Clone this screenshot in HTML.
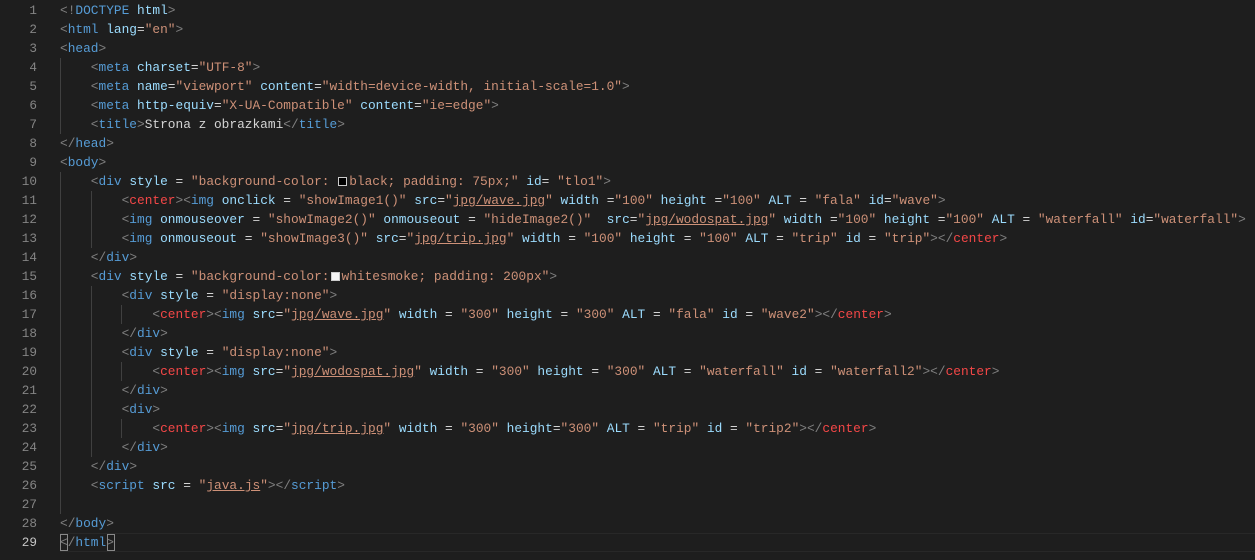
<!DOCTYPE html>
<html><head><style>
body{margin:0;background:#1e1e1e;width:1255px;height:560px;overflow:hidden;position:relative;font-family:"Liberation Mono",monospace;font-size:12.83px;color:#d4d4d4}
.ln{position:absolute;left:0;width:37px;text-align:right;color:#858585;height:19px;line-height:19px;font-size:12.67px}
.cd{position:absolute;left:60px;white-space:pre;height:19px;line-height:19px}
.p{color:#808080}.t{color:#569cd6}.a{color:#9cdcfe}.s{color:#ce9178}.c{color:#f44747}
.u{text-decoration:underline;text-decoration-color:#ce9178}
.g{position:absolute;width:1px;background:#404040}
.sw{display:inline-block;width:9px;height:9px;border:1px solid #ccc;margin:0 2px 0 1px;vertical-align:-1px;box-sizing:border-box}
</style></head><body>
<div style="position:absolute;left:60px;top:533px;width:1195px;height:19px;border-top:1px solid #282828;border-bottom:1px solid #282828;box-sizing:border-box"></div>
<div class="g" style="left:60px;top:58px;height:76px"></div>
<div class="g" style="left:60px;top:172px;height:342px"></div>
<div class="g" style="left:91px;top:191px;height:57px"></div>
<div class="g" style="left:91px;top:286px;height:171px"></div>
<div class="g" style="left:121px;top:305px;height:19px"></div>
<div class="g" style="left:121px;top:362px;height:19px"></div>
<div class="g" style="left:121px;top:419px;height:19px"></div>
<div style="position:absolute;left:60px;top:534px;width:8px;height:17px;border:1px solid #888;box-sizing:border-box"></div>
<div style="position:absolute;left:107px;top:534px;width:8px;height:17px;border:1px solid #888;box-sizing:border-box"></div>

<div class="ln" style="top:1px">1</div><div class="cd" style="top:1px"><span class="p">&lt;!</span><span class="t">DOCTYPE</span> <span class="a">html</span><span class="p">&gt;</span></div>
<div class="ln" style="top:20px">2</div><div class="cd" style="top:20px"><span class="p">&lt;</span><span class="t">html</span> <span class="a">lang</span>=<span class="s">"en"</span><span class="p">&gt;</span></div>
<div class="ln" style="top:39px">3</div><div class="cd" style="top:39px"><span class="p">&lt;</span><span class="t">head</span><span class="p">&gt;</span></div>
<div class="ln" style="top:58px">4</div><div class="cd" style="top:58px">    <span class="p">&lt;</span><span class="t">meta</span> <span class="a">charset</span>=<span class="s">"UTF-8"</span><span class="p">&gt;</span></div>
<div class="ln" style="top:77px">5</div><div class="cd" style="top:77px">    <span class="p">&lt;</span><span class="t">meta</span> <span class="a">name</span>=<span class="s">"viewport"</span> <span class="a">content</span>=<span class="s">"width=device-width, initial-scale=1.0"</span><span class="p">&gt;</span></div>
<div class="ln" style="top:96px">6</div><div class="cd" style="top:96px">    <span class="p">&lt;</span><span class="t">meta</span> <span class="a">http-equiv</span>=<span class="s">"X-UA-Compatible"</span> <span class="a">content</span>=<span class="s">"ie=edge"</span><span class="p">&gt;</span></div>
<div class="ln" style="top:115px">7</div><div class="cd" style="top:115px">    <span class="p">&lt;</span><span class="t">title</span><span class="p">&gt;</span>Strona z obrazkami<span class="p">&lt;/</span><span class="t">title</span><span class="p">&gt;</span></div>
<div class="ln" style="top:134px">8</div><div class="cd" style="top:134px"><span class="p">&lt;/</span><span class="t">head</span><span class="p">&gt;</span></div>
<div class="ln" style="top:153px">9</div><div class="cd" style="top:153px"><span class="p">&lt;</span><span class="t">body</span><span class="p">&gt;</span></div>
<div class="ln" style="top:172px">10</div><div class="cd" style="top:172px">    <span class="p">&lt;</span><span class="t">div</span> <span class="a">style</span> = <span class="s">"background-color: <span class="sw" style="background:#000"></span>black; padding: 75px;"</span> <span class="a">id</span>= <span class="s">"tlo1"</span><span class="p">&gt;</span></div>
<div class="ln" style="top:191px">11</div><div class="cd" style="top:191px">        <span class="p">&lt;</span><span class="c">center</span><span class="p">&gt;&lt;</span><span class="t">img</span> <span class="a">onclick</span> = <span class="s">"showImage1()"</span> <span class="a">src</span>=<span class="s">"<span class="u">jpg/wave.jpg</span>"</span> <span class="a">width</span> =<span class="s">"100"</span> <span class="a">height</span> =<span class="s">"100"</span> <span class="a">ALT</span> = <span class="s">"fala"</span> <span class="a">id</span>=<span class="s">"wave"</span><span class="p">&gt;</span></div>
<div class="ln" style="top:210px">12</div><div class="cd" style="top:210px">        <span class="p">&lt;</span><span class="t">img</span> <span class="a">onmouseover</span> = <span class="s">"showImage2()"</span> <span class="a">onmouseout</span> = <span class="s">"hideImage2()"</span>  <span class="a">src</span>=<span class="s">"<span class="u">jpg/wodospat.jpg</span>"</span> <span class="a">width</span> =<span class="s">"100"</span> <span class="a">height</span> =<span class="s">"100"</span> <span class="a">ALT</span> = <span class="s">"waterfall"</span> <span class="a">id</span>=<span class="s">"waterfall"</span><span class="p">&gt;</span></div>
<div class="ln" style="top:229px">13</div><div class="cd" style="top:229px">        <span class="p">&lt;</span><span class="t">img</span> <span class="a">onmouseout</span> = <span class="s">"showImage3()"</span> <span class="a">src</span>=<span class="s">"<span class="u">jpg/trip.jpg</span>"</span> <span class="a">width</span> = <span class="s">"100"</span> <span class="a">height</span> = <span class="s">"100"</span> <span class="a">ALT</span> = <span class="s">"trip"</span> <span class="a">id</span> = <span class="s">"trip"</span><span class="p">&gt;&lt;/</span><span class="c">center</span><span class="p">&gt;</span></div>
<div class="ln" style="top:248px">14</div><div class="cd" style="top:248px">    <span class="p">&lt;/</span><span class="t">div</span><span class="p">&gt;</span></div>
<div class="ln" style="top:267px">15</div><div class="cd" style="top:267px">    <span class="p">&lt;</span><span class="t">div</span> <span class="a">style</span> = <span class="s">"background-color:<span class="sw" style="background:#f5f5f5"></span>whitesmoke; padding: 200px"</span><span class="p">&gt;</span></div>
<div class="ln" style="top:286px">16</div><div class="cd" style="top:286px">        <span class="p">&lt;</span><span class="t">div</span> <span class="a">style</span> = <span class="s">"display:none"</span><span class="p">&gt;</span></div>
<div class="ln" style="top:305px">17</div><div class="cd" style="top:305px">            <span class="p">&lt;</span><span class="c">center</span><span class="p">&gt;&lt;</span><span class="t">img</span> <span class="a">src</span>=<span class="s">"<span class="u">jpg/wave.jpg</span>"</span> <span class="a">width</span> = <span class="s">"300"</span> <span class="a">height</span> = <span class="s">"300"</span> <span class="a">ALT</span> = <span class="s">"fala"</span> <span class="a">id</span> = <span class="s">"wave2"</span><span class="p">&gt;&lt;/</span><span class="c">center</span><span class="p">&gt;</span></div>
<div class="ln" style="top:324px">18</div><div class="cd" style="top:324px">        <span class="p">&lt;/</span><span class="t">div</span><span class="p">&gt;</span></div>
<div class="ln" style="top:343px">19</div><div class="cd" style="top:343px">        <span class="p">&lt;</span><span class="t">div</span> <span class="a">style</span> = <span class="s">"display:none"</span><span class="p">&gt;</span></div>
<div class="ln" style="top:362px">20</div><div class="cd" style="top:362px">            <span class="p">&lt;</span><span class="c">center</span><span class="p">&gt;&lt;</span><span class="t">img</span> <span class="a">src</span>=<span class="s">"<span class="u">jpg/wodospat.jpg</span>"</span> <span class="a">width</span> = <span class="s">"300"</span> <span class="a">height</span> = <span class="s">"300"</span> <span class="a">ALT</span> = <span class="s">"waterfall"</span> <span class="a">id</span> = <span class="s">"waterfall2"</span><span class="p">&gt;&lt;/</span><span class="c">center</span><span class="p">&gt;</span></div>
<div class="ln" style="top:381px">21</div><div class="cd" style="top:381px">        <span class="p">&lt;/</span><span class="t">div</span><span class="p">&gt;</span></div>
<div class="ln" style="top:400px">22</div><div class="cd" style="top:400px">        <span class="p">&lt;</span><span class="t">div</span><span class="p">&gt;</span></div>
<div class="ln" style="top:419px">23</div><div class="cd" style="top:419px">            <span class="p">&lt;</span><span class="c">center</span><span class="p">&gt;&lt;</span><span class="t">img</span> <span class="a">src</span>=<span class="s">"<span class="u">jpg/trip.jpg</span>"</span> <span class="a">width</span> = <span class="s">"300"</span> <span class="a">height</span>=<span class="s">"300"</span> <span class="a">ALT</span> = <span class="s">"trip"</span> <span class="a">id</span> = <span class="s">"trip2"</span><span class="p">&gt;&lt;/</span><span class="c">center</span><span class="p">&gt;</span></div>
<div class="ln" style="top:438px">24</div><div class="cd" style="top:438px">        <span class="p">&lt;/</span><span class="t">div</span><span class="p">&gt;</span></div>
<div class="ln" style="top:457px">25</div><div class="cd" style="top:457px">    <span class="p">&lt;/</span><span class="t">div</span><span class="p">&gt;</span></div>
<div class="ln" style="top:476px">26</div><div class="cd" style="top:476px">    <span class="p">&lt;</span><span class="t">script</span> <span class="a">src</span> = <span class="s">"<span class="u">java.js</span>"</span><span class="p">&gt;&lt;/</span><span class="t">script</span><span class="p">&gt;</span></div>
<div class="ln" style="top:495px">27</div>
<div class="ln" style="top:514px">28</div><div class="cd" style="top:514px"><span class="p">&lt;/</span><span class="t">body</span><span class="p">&gt;</span></div>
<div class="ln" style="top:533px;color:#c6c6c6">29</div><div class="cd" style="top:533px"><span class="p">&lt;/</span><span class="t">html</span><span class="p">&gt;</span></div>
</body></html>
